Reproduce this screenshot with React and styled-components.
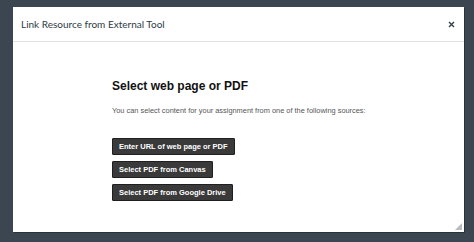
import React from "react";
import styled, { createGlobalStyle } from "styled-components";

const Global = createGlobalStyle`
  html, body { margin: 0; padding: 0; }
  body { background: #3b4650; width: 474px; height: 242px; overflow: hidden; }
`;

const Page = styled.div`
  width: 474px;
  height: 242px;
  padding: 7px 10px 10px 13px;
  box-sizing: border-box;
  display: flex;
`;

const Modal = styled.div`
  position: relative;
  flex: 1;
  background: #fff;
  display: flex;
  flex-direction: column;
  box-shadow: 1px 1px 0 #2a323a;
`;

const Header = styled.div`
  height: 34px;
  border-bottom: 1px solid #dfe3e6;
  display: flex;
  align-items: center;
  justify-content: space-between;
  padding: 0 8px 0 8px;
  box-sizing: content-box;
`;

const Title = styled.h1`
  margin: 0;
  font-family: Lato, "Noto Sans", sans-serif;
  font-weight: 400;
  font-size: 10px;
  color: #2d3b45;
`;

const Close = styled.button`
  border: 0;
  background: none;
  padding: 0;
  width: 10px;
  height: 10px;
  display: flex;
  align-items: center;
  justify-content: center;
  color: #2d3b45;
`;

const Body = styled.div`
  flex: 1;
  padding: 37px 0 0 99px;
  display: flex;
  flex-direction: column;
  align-items: flex-start;
  font-family: "Liberation Sans", Arial, sans-serif;
`;

const Heading = styled.h2`
  margin: 0;
  font-size: 12px;
  font-weight: 700;
  color: #111;
  line-height: 14px;
`;

const Lead = styled.p`
  margin: 13px 0 22px;
  font-size: 7.4px;
  color: #555;
  line-height: 10px;
`;

const Buttons = styled.div`
  display: flex;
  flex-direction: column;
  align-items: flex-start;
  gap: 6px;
`;

const Btn = styled.button`
  font-family: "Liberation Sans", Arial, sans-serif;
  font-weight: 700;
  font-size: 7.5px;
  color: #fff;
  background: #3a3a3a;
  border: 1px solid #1f1f1f;
  border-radius: 1px;
  height: 17px;
  padding: 0 6px;
  line-height: 15px;
`;

const Grip = styled.svg`
  position: absolute;
  right: 2px;
  bottom: 2px;
`;

export default function App() {
  return (
    <>
      <Global />
      <Page>
        <Modal>
          <Header>
            <Title>Link Resource from External Tool</Title>
            <Close aria-label="Close">
              <svg width="7" height="7" viewBox="0 0 7 7">
                <path d="M1 1L6 6M6 1L1 6" stroke="#2d3b45" strokeWidth="1.3" />
              </svg>
            </Close>
          </Header>
          <Body>
            <Heading>Select web page or PDF</Heading>
            <Lead>You can select content for your assignment from one of the following sources:</Lead>
            <Buttons>
              <Btn>Enter URL of web page or PDF</Btn>
              <Btn>Select PDF from Canvas</Btn>
              <Btn>Select PDF from Google Drive</Btn>
            </Buttons>
          </Body>
          <Grip width="7" height="7" viewBox="0 0 7 7">
            <path d="M7 0L7 7L0 7Z" fill="#b8bcc0" />
          </Grip>
        </Modal>
      </Page>
    </>
  );
}
